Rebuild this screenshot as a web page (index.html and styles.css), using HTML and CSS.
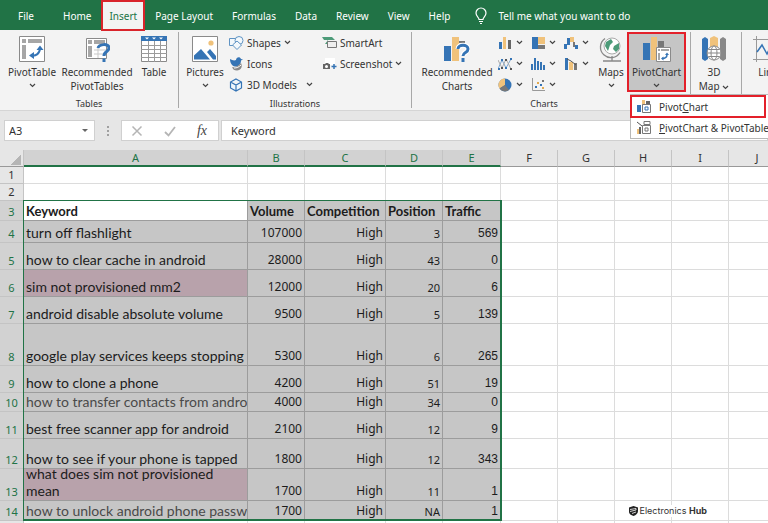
FILE: index.html
```
<!DOCTYPE html>
<html lang="en">
  <head>
    <meta charset="utf-8" />
    <title>Keywords</title>
    <link rel="stylesheet" href="styles.css">
  </head>

  <body>
    <svg class="defs" aria-hidden="true">
      <symbol id="chev" viewBox="0 0 7 5"><path d="M1 1l2.500 2.500L6 1" fill="none" stroke="#444" stroke-width="1.200"/></symbol>
    </svg>

    <nav class="tabs">
      <a class="file" href="#">File</a>
      <a href="#">Home</a>
      <a class="active" href="#">Insert</a>
      <a href="#">Page Layout</a>
      <a href="#">Formulas</a>
      <a href="#">Data</a>
      <a href="#">Review</a>
      <a href="#">View</a>
      <a href="#">Help</a>
      <button class="tell">
        <svg width="14" height="18" viewBox="0 0 14 18" fill="none" stroke="#fff" stroke-width="1.200"><path d="M5 12.500c0-2-3-3-3-6.500a5 5 0 0 1 10 0c0 3.500-3 4.500-3 6.500zM5 14.500h4M6 16.500h2"/></svg>
        Tell me what you want to do
      </button>
    </nav>

    <div class="ribbon">
      <section class="group tables">
        <div class="tools">
          <button class="big w56">
            <svg width="26" height="26" viewBox="0 0 26 26"><path d="M.5.500h25v25H.5z" fill="#fff" stroke="#8a8a8a"/><path d="M3 3h4v4H3zM9 3h14v4H9zM3 9h4v14H3z" fill="#a6a6a6"/><path d="M12 19.500c5 1 9-2 9-8" fill="none" stroke="#3574b5" stroke-width="2"/><path d="M17.500 14l3.500-4.500 3.500 4.500zM15 16l-5 3.500 5 3.500z" fill="#3574b5"/></svg>
            <span>PivotTable</span>
            <svg class="chev"><use href="#chev"/></svg>
          </button>
          <button class="big w74">
            <svg width="26" height="26" viewBox="0 0 26 26"><path d="M2.500 2.500h20v20h-20z" fill="#fff" stroke="#8a8a8a"/><path d="M4 4h4v4H4zM10 4h11v4H10zM4 10h4v11H4z" fill="#a6a6a6"/><path d="M10 14h12M10 18h12M14 10v12" stroke="#c9c9c9"/><path d="M14 12c1-4 11-5 11 0 0 4-5 3-5 8" fill="none" stroke="#3574b5" stroke-width="3"/><path d="M18.500 22.500h3v3.500h-3z" fill="#3574b5"/></svg>
            <span>Recommended<br>PivotTables</span>
          </button>
          <button class="big w40">
            <svg width="26" height="26" viewBox="0 0 26 26"><path d="M.5.500h25v25H.5z" fill="#fff" stroke="#8a8a8a"/><path d="M0 0h26v5H0z" fill="#3574b5"/><path d="M4 1.500h4l-2 2zM11 1.500h4l-2 2zM18 1.500h4l-2 2z" fill="#fff"/><path d="M0 9.500h26M0 13.500h26M0 17.500h26M0 21.500h26M7.500 5v21M13.500 5v21M19.500 5v21" stroke="#9b9b9b"/></svg>
            <span>Table</span>
          </button>
        </div>
        <h2>Tables</h2>
      </section>

      <section class="group illustrations">
        <div class="tools">
          <button class="big w44">
            <svg width="26" height="26" viewBox="0 0 26 26"><path d="M.5.500h25v25H.5z" fill="#fff" stroke="#8a8a8a"/><circle cx="19" cy="7" r="2.600" fill="#f0c27b"/><path d="M2 23.500v-4l7-6.500 9 10.500zM15 16l3-3 6 7v3.500h-3z" fill="#3574b5"/></svg>
            <span>Pictures</span>
            <svg class="chev"><use href="#chev"/></svg>
          </button>
          <div class="stack first">
            <button class="small">
              <svg width="15" height="14" viewBox="0 0 15 14" fill="#f3f8fc" stroke="#5f93c3"><path d="M.5 2.500h8v7h-8z"/><circle cx="10" cy="4.500" r="4"/><path d="M8 5l4.500 4L8 13.500 3.500 9z"/></svg>
              Shapes
              <svg class="chev"><use href="#chev"/></svg>
            </button>
            <button class="small">
              <svg width="15" height="14" viewBox="0 0 15 14"><path d="M1 2c2 1 4 2 6 1 0-3 4-4 5-1l2 .500-2 1c0 4-3 6-6 6C3 9 1 6 1 2z" fill="#3574b5"/><path d="M3 10c3 1 6-1 9-4 2 4 0 7-4 7.500-3 0-4-1-5-3.500z" fill="#888"/><path d="M5 11c3 0 5-1 7-3" stroke="#fff" fill="none"/></svg>
              Icons
            </button>
            <button class="small">
              <svg width="15" height="14" viewBox="0 0 15 14" fill="#eef6fc" stroke="#3574b5" stroke-width="1.200"><path d="M7 1l5.500 3v6L7 13l-5.500-3V4zM1.500 4L7 7l5.500-3M7 7v6"/></svg>
              3D Models
              <svg class="chev far"><use href="#chev"/></svg>
            </button>
          </div>
          <div class="stack">
            <button class="small">
              <svg width="15" height="14" viewBox="0 0 15 14"><path d="M0 1h10l3 3H5l3 4H3l3-4H2z" fill="#4d9b79"/><path d="M5.500 5.500h9v6h-9z" fill="#eee" stroke="#777"/></svg>
              SmartArt
            </button>
            <button class="small">
              <svg width="15" height="14" viewBox="0 0 15 14"><path d="M3 1h10v7H3z" fill="#fff"/><path d="M1 7h2l1-1h2l1 1h1v5H1z" fill="#666"/><circle cx="4.500" cy="9.500" r="1.500" fill="#fff"/><path d="M12 7v5M9.500 9.500h5" stroke="#3574b5" stroke-width="1.500"/></svg>
              Screenshot
              <svg class="chev"><use href="#chev"/></svg>
            </button>
          </div>
        </div>
        <h2>Illustrations</h2>
      </section>

      <section class="group charts">
        <div class="tools">
          <button class="big w74">
            <svg width="26" height="26" viewBox="0 0 26 26"><path d="M0 10h7v15H0z" fill="#3574b5"/><path d="M8 1h7v24H8z" fill="#f0c27b"/><path d="M15 5h6v2h-6z" fill="#777"/><path d="M14 13c0-5 10-5 10 0 0 4-5 3-5 7" fill="none" stroke="#fff" stroke-width="5"/><path d="M14 13c0-5 10-5 10 0 0 4-5 3-5 7" fill="none" stroke="#3574b5" stroke-width="3"/><path d="M17.500 22h3v4h-3z" fill="#3574b5"/></svg>
            <span>Recommended<br>Charts</span>
          </button>
          <div class="minis">
            <button class="mini" aria-label="Column chart">
              <svg width="14" height="14" viewBox="0 0 14 14"><path d="M1 6h3v7H1z" fill="#3574b5"/><path d="M5 1h3v12H5z" fill="#f0c27b"/><path d="M10 4h3v9h-3z" fill="#666"/></svg>
              <svg class="chev"><use href="#chev"/></svg>
            </button>
            <button class="mini" aria-label="Hierarchy chart">
              <svg width="14" height="14" viewBox="0 0 14 14"><path d="M1 1h6v12H1z" fill="#3574b5"/><path d="M7 1h7v7H7z" fill="#f0c27b"/><path d="M7 9h7v4H7z" fill="#777"/></svg>
              <svg class="chev"><use href="#chev"/></svg>
            </button>
            <button class="mini" aria-label="Waterfall chart">
              <svg width="14" height="14" viewBox="0 0 14 14"><path d="M0 8h3v5H0zM3 2h3v7H3z" fill="#3574b5"/><path d="M6 1h4v5H6z" fill="#f0c27b"/><path d="M9 6h2v5H9z" fill="#777"/><path d="M11 9h3v4h-3z" fill="#3574b5"/></svg>
              <svg class="chev"><use href="#chev"/></svg>
            </button>
            <button class="mini" aria-label="Line chart">
              <svg width="14" height="14" viewBox="0 0 14 14" fill="none"><path d="M0 12L4 3l4 8 5-9" stroke="#7ba5cf"/><path d="M0 3l4 8 4-9 5 10" stroke="#aaa"/><path d="M3 2h2v2H3zM7 10h2v2H7zM12 1h2v2h-2zM0 11h2v2H0z" fill="#3574b5"/><path d="M3 10h2v2H3zM7 2h2v2H7zM12 11h2v2h-2z" fill="#555"/></svg>
              <svg class="chev"><use href="#chev"/></svg>
            </button>
            <button class="mini" aria-label="Statistic chart">
              <svg width="14" height="14" viewBox="0 0 14 14"><path d="M0 7h2v6H0zM3 1h2v12H3zM6 4h2v9H6zM9 5h2v8H9zM12 8h2v5h-2z" fill="#3574b5"/></svg>
              <svg class="chev"><use href="#chev"/></svg>
            </button>
            <button class="mini" aria-label="Combo chart">
              <svg width="14" height="14" viewBox="0 0 14 14"><path d="M1 1h3v12H1z" fill="#3574b5"/><path d="M5 5h4v8H5z" fill="#f0c27b"/><path d="M10 6h3v7h-3z" fill="#777"/><path d="M3 2l4 2 5 4" stroke="#555" fill="none"/></svg>
              <svg class="chev"><use href="#chev"/></svg>
            </button>
            <button class="mini" aria-label="Pie chart">
              <svg width="14" height="14" viewBox="0 0 14 14"><circle cx="7" cy="7" r="6.500" fill="#3574b5"/><path d="M7 7V.500A6.500 6.500 0 0 0 1.500 10.500z" fill="#f0c27b"/><path d="M7 7l-5.500 3.500A6.500 6.500 0 0 0 11 12z" fill="#777"/></svg>
              <svg class="chev"><use href="#chev"/></svg>
            </button>
            <button class="mini" aria-label="Scatter chart">
              <svg width="14" height="14" viewBox="0 0 14 14"><path d="M1.500 0v12.500H14" stroke="#999" fill="none"/><path d="M4 8h2v2H4zM9 6h2v2H9z" fill="#3574b5"/><path d="M6 4h2v2H6zM11 9h2v2h-2z" fill="#e0a950"/><path d="M11 2h2v2h-2z" fill="#777"/></svg>
              <svg class="chev"><use href="#chev"/></svg>
            </button>
          </div>
          <button class="big w28">
            <svg width="26" height="26" viewBox="0 0 26 26" fill="none"><path d="M7 2.500a10.500 10.500 0 1 0 15 14M14 20v5M5 25h18" stroke="#888" stroke-width="1.300"/><circle cx="14" cy="10" r="8" fill="#fff" stroke="#aaa"/><path d="M8 6l5-3 2 3-3 3-2 6-3-5zM16 10l5-3v6l-3 3-3-3z" fill="#4d9b79"/></svg>
            <span>Maps</span>
            <svg class="chev"><use href="#chev"/></svg>
          </button>
          <div class="pivot">
            <button class="big pressed" aria-expanded="true">
              <svg width="28" height="26" viewBox="0 0 28 26"><path d="M0 7h7v17H0z" fill="#3574b5"/><path d="M8 1h6v23H8z" fill="#f0c27b"/><path d="M15 5h6v6h-6z" fill="#777"/><path d="M13.500 11.500h14v14h-14z" fill="#fff" stroke="#8a8a8a"/><path d="M15 13h2v2h-2zM18 13h8v2h-8zM15 17h2v7h-2z" fill="#a6a6a6"/><path d="M19 22.500c3 0 5-1 5-4" stroke="#3574b5" stroke-width="1.500" fill="none"/><path d="M22 19l2-2.500 2 2.500zM20.500 20.500l-2.500 2 2.500 2z" fill="#3574b5"/></svg>
              <span>PivotChart</span>
              <svg class="chev"><use href="#chev"/></svg>
            </button>
            <div class="menu" role="menu">
              <button class="item marked" role="menuitem">
                <svg width="14" height="14" viewBox="0 0 14 14"><path d="M0 5h4v7H0z" fill="#3574b5"/><path d="M5 0h3v5H5z" fill="#f0c27b"/><path d="M9 1h4v3H9z" fill="#666"/><path d="M5.500 4.500h8v8h-8z" fill="#fff" stroke="#777"/><path d="M8 7h3v3H8z" fill="none" stroke="#3574b5"/></svg>
                <span>Pivot<u>C</u>hart</span>
              </button>
              <button class="item" role="menuitem">
                <svg width="14" height="14" viewBox="0 0 14 14"><path d="M0 1l5 4" stroke="#555"/><path d="M0 8h2v5H0z" fill="#f0c27b"/><path d="M2 6h2v7H2z" fill="#666"/><path d="M7 .500h6v3H7z" fill="#fff" stroke="#777"/><path d="M5.500 4.500h8v8h-8z" fill="#fff" stroke="#777"/><path d="M8 7h3v3H8z" fill="none" stroke="#777"/></svg>
                <span><u>P</u>ivotChart &amp; PivotTable</span>
              </button>
            </div>
          </div>
        </div>
        <h2>Charts</h2>
      </section>

      <section class="group tours">
        <div class="tools">
          <button class="big w44">
            <svg width="26" height="26" viewBox="0 0 26 26"><path d="M1 3l3-2 3 2v20l-3 2-3-2z" fill="#3574b5"/><path d="M9 2l4-2 4 2v13H9z" fill="#f0c27b"/><path d="M19 3l3-2 3 2v20l-3 2-3-2z" fill="#888"/><g fill="#fff" stroke="#888"><circle cx="13" cy="17" r="7"/><ellipse cx="13" cy="17" rx="3" ry="7"/><path d="M6 17h14M7.500 13.500h11M7.500 20.500h11"/></g></svg>
            <span>3D<br>Map <svg class="chev"><use href="#chev"/></svg></span>
          </button>
        </div>
      </section>

      <section class="group sparklines">
        <div class="tools">
          <button class="big w44">
            <svg width="30" height="26" viewBox="0 0 30 26" fill="none"><path d="M3.500 0v26M0 3.500h30M0 23.500h30" stroke="#999"/><path d="M4 16l5-7 5 9 5-10 5 9 5-5" stroke="#3574b5" stroke-width="1.500"/></svg>
            <span>Line</span>
          </button>
        </div>
      </section>
    </div>

    <div class="formula-bar">
      <div class="name-box">
        <input aria-label="Name box" value="A3">
        <button aria-label="Open name list"><svg width="6" height="4" viewBox="0 0 6 4"><path d="M0 0h6L3 3z" fill="#666"/></svg></button>
      </div>
      <svg class="grip" width="2" height="12" viewBox="0 0 2 12"><path d="M0 1h2v2H0zM0 5h2v2H0zM0 9h2v2H0z" fill="#a0a0a0"/></svg>
      <div class="actions">
        <button aria-label="Cancel"><svg width="12" height="12" viewBox="0 0 12 12" stroke="#b5b5b5" stroke-width="1.500"><path d="M1.500 1.500l9 9M10.500 1.500l-9 9"/></svg></button>
        <button aria-label="Enter"><svg width="12" height="12" viewBox="0 0 12 12" fill="none" stroke="#b5b5b5" stroke-width="1.800"><path d="M1 7l3.500 3.500L11 2"/></svg></button>
        <button class="fx" aria-label="Insert function">fx</button>
      </div>
      <input class="formula" aria-label="Formula" value="Keyword">
    </div>

    <main class="sheet">
      <table>
        <colgroup>
          <col class="c-num"><col class="c-a"><col class="c-n"><col class="c-c"><col class="c-n"><col class="c-e">
          <col class="c-n"><col class="c-n"><col class="c-n"><col class="c-n"><col class="c-n">
        </colgroup>
        <thead>
          <tr>
            <th><div class="corner"></div></th>
            <th class="sel">A</th><th class="sel">B</th><th class="sel">C</th><th class="sel">D</th><th class="sel">E</th>
            <th>F</th><th>G</th><th>H</th><th>I</th><th>J</th>
          </tr>
        </thead>
        <tbody>
          <tr class="h17"><th>1</th><td></td><td></td><td></td><td></td><td></td><td></td><td></td><td></td><td></td><td></td></tr>
          <tr class="h17"><th>2</th><td></td><td></td><td></td><td></td><td></td><td></td><td></td><td></td><td></td><td></td></tr>
        </tbody>
        <tbody class="range">
          <tr class="head h20"><th>3</th><td class="current">Keyword</td><td>Volume</td><td>Competition</td><td>Position</td><td>Traffic</td><td></td><td></td><td></td><td></td><td></td></tr>
          <tr class="h22"><th>4</th><td>turn off flashlight</td><td>107000</td><td>High</td><td>3</td><td>569</td><td></td><td></td><td></td><td></td><td></td></tr>
          <tr class="h27"><th>5</th><td>how to clear cache in android</td><td>28000</td><td>High</td><td>43</td><td>0</td><td></td><td></td><td></td><td></td><td></td></tr>
          <tr class="h27"><th>6</th><td class="pink">sim not provisioned mm2</td><td>12000</td><td>High</td><td>20</td><td>6</td><td></td><td></td><td></td><td></td><td></td></tr>
          <tr class="h27"><th>7</th><td>android disable absolute volume</td><td>9500</td><td>High</td><td>5</td><td>139</td><td></td><td></td><td></td><td></td><td></td></tr>
          <tr class="h42"><th>8</th><td>google play services keeps stopping</td><td>5300</td><td>High</td><td>6</td><td>265</td><td></td><td></td><td></td><td></td><td></td></tr>
          <tr class="h27"><th>9</th><td>how to clone a phone</td><td>4200</td><td>High</td><td>51</td><td>19</td><td></td><td></td><td></td><td></td><td></td></tr>
          <tr class="h19"><th>10</th><td class="soft">how to transfer contacts from android</td><td>4000</td><td>High</td><td>34</td><td>0</td><td></td><td></td><td></td><td></td><td></td></tr>
          <tr class="h27"><th>11</th><td>best free scanner app for android</td><td>2100</td><td>High</td><td>12</td><td>9</td><td></td><td></td><td></td><td></td><td></td></tr>
          <tr class="h30"><th>12</th><td>how to see if your phone is tapped</td><td>1800</td><td>High</td><td>12</td><td>343</td><td></td><td></td><td></td><td></td><td></td></tr>
          <tr class="h32"><th>13</th><td class="pink"><div class="wrap">what does sim not provisioned mean</div></td><td>1700</td><td>High</td><td>11</td><td>1</td><td></td><td></td><td></td><td></td><td></td></tr>
          <tr class="h20"><th>14</th><td class="soft">how to unlock android phone password</td><td>1700</td><td>High</td><td>NA</td><td>1</td><td></td><td></td><td></td><td></td><td></td></tr>
        </tbody>
        <tbody>
          <tr class="h20"><th></th><td></td><td></td><td></td><td></td><td></td><td></td><td></td><td></td><td></td><td></td></tr>
        </tbody>
      </table>
      <div class="selection"></div>
      <div class="brand">
        <svg width="9" height="10" viewBox="0 0 9 10"><path d="M0 1.500L4.500 0 9 1.500V5c0 2.500-2 4-4.500 5C2 9 0 8 0 6z" fill="#222"/><path d="M1 3.500l6-1v1.500L1 5.500M3 7.500l4-1.500" fill="none" stroke="#fff" stroke-width=".8"/></svg>
        <span>Electronics <b>Hub</b></span>
      </div>
    </main>
  </body>
</html>
```
FILE: styles.css
```
* {
  box-sizing: border-box;
}
body {
  margin: 0;
  height: 100vh;
  overflow: hidden;
  display: flex;
  flex-direction: column;
  background-color: #e6e6e6;
  color: #333;
  font: 10px/14px "Noto Sans", "Open Sans", sans-serif;
}
button,
input {
  font: inherit;
  color: inherit;
  border: 0;
  margin: 0;
  padding: 0;
  background: none;
}
svg {
  flex: none;
}
.defs {
  position: absolute;
  width: 0;
  height: 0;
}
.chev {
  width: 7px;
  height: 5px;
}

/* tabs */
.tabs {
  display: flex;
  flex: none;
  gap: 1px;
  height: 30px;
  background-color: #217346;
  color: #fff;
  white-space: nowrap;
}
.tabs a {
  color: inherit;
  text-decoration: none;
  padding: 9px 9px 0;
}
.tabs a.file {
  padding: 9px 19px 0 18px;
}
.tabs a.active {
  height: 31px;
  padding: 7px 6px 0;
  border: 2px solid #d9242b;
  background-color: #f3f3f3;
  color: #217346;
  z-index: 1;
}
.tell {
  display: flex;
  align-items: center;
  gap: 10px;
  padding: 2px 0 0 14px;
}

/* ribbon */
.ribbon {
  display: flex;
  flex: none;
  height: 81px;
  background-color: #f3f3f3;
  border-bottom: 1px solid #d5d5d5;
}
.group {
  flex: none;
  padding: 6px 4px 0;
  border-right: 1px solid #b5b5b5;
  border-image: linear-gradient(transparent 4%, #a8a8a8 4%, #a8a8a8 96%, transparent 96%) 1;
  border-width: 0 1px 0 0;
}
.tables {
  width: 179px;
}
.illustrations {
  width: 233px;
}
.charts {
  width: 279px;
  padding-left: 8px;
}
.tours {
  width: 51px;
  padding-left: 1px;
}
.sparklines {
  padding-left: 4px;
}
.tools {
  display: flex;
  height: 61px;
}
.group h2 {
  margin: 0;
  font-size: 9px;
  font-weight: normal;
  line-height: 14px;
  text-align: center;
}
.charts h2 {
  padding-right: 18px;
}
.big {
  display: flex;
  flex-direction: column;
  align-items: center;
  flex: none;
  white-space: nowrap;
}
.big > span {
  margin-top: 3px;
}
.big > .chev {
  margin-top: 4px;
}
.w28 { width: 28px; }
.w40 { width: 40px; }
.w44 { width: 44px; }
.w56 { width: 56px; }
.w74 { width: 74px; }
.stack {
  display: flex;
  flex-direction: column;
  gap: 8px;
  padding-left: 2px;
}
.stack.first {
  width: 93px;
}
.small {
  display: flex;
  align-items: center;
  gap: 3px;
  height: 13px;
  white-space: nowrap;
}
.small .far {
  margin-left: 6px;
}
.minis {
  display: grid;
  grid-template-columns: repeat(3, 33px);
  grid-auto-rows: 21px;
  padding-left: 4px;
  width: 104px;
}
.mini {
  display: flex;
  align-items: center;
  gap: 4px;
  height: 13px;
}
.pivot {
  position: relative;
  margin-left: 2px;
}
.pressed {
  width: 59px;
  height: 60px;
  margin-top: -4px;
  padding-top: 2px;
  border: 2px solid #e3202a;
  background-color: #c5c5c5;
}
.menu {
  position: absolute;
  top: 58px;
  left: 3px;
  width: 180px;
  border: 1px solid #b8b8b8;
  background-color: #fff;
  z-index: 2;
}
.item {
  display: flex;
  align-items: center;
  gap: 8px;
  width: 136px;
  height: 20px;
  padding-left: 6px;
  white-space: nowrap;
}
.item.marked {
  height: 23px;
  margin-left: -1px;
  padding-left: 5px;
  border: 2px solid #e3202a;
}

/* formula bar */
.formula-bar {
  display: flex;
  flex: none;
  align-items: center;
  height: 39px;
  padding-left: 4px;
  font-size: 11px;
}
.name-box,
.actions,
.formula {
  height: 21px;
  border: 1px solid #d0d0d0;
  background-color: #fff;
}
.name-box {
  display: flex;
  width: 91px;
  padding: 0 6px 0 4px;
}
.name-box button {
  display: flex;
  align-items: center;
}
.name-box input {
  flex: 1;
  min-width: 0;
}
.grip {
  margin: 0 12px;
}
.actions {
  display: flex;
  align-items: center;
  justify-content: space-between;
  width: 98px;
  padding: 0 11px 0 9px;
}
.actions button {
  display: flex;
}
.actions .fx {
  font: italic 14px/16px "Liberation Serif", serif;
  color: #444;
}
.formula {
  flex: 1;
  min-width: 0;
  margin-left: 2px;
  padding-left: 9px;
}

/* sheet */
.sheet {
  position: relative;
  flex: 1;
  overflow: hidden;
  background-color: #fff;
}
table {
  table-layout: fixed;
  width: 786px;
  border-collapse: separate;
  border-spacing: 0;
}
.c-num { width: 24px; }
.c-a { width: 224px; }
.c-n { width: 57px; }
.c-c { width: 81px; }
.c-e { width: 58px; }
.h17 { height: 17px; }
.h19 { height: 19px; }
.h20 { height: 20px; }
.h22 { height: 22px; }
.h27 { height: 27px; }
.h30 { height: 30px; }
.h32 { height: 32px; }
.h42 { height: 42px; }
th {
  padding: 0;
  border-right: 1px solid #c4c4c4;
  border-bottom: 1px solid #c4c4c4;
  background-color: #e6e6e6;
  font-size: 11px;
  font-weight: normal;
  line-height: 16px;
  vertical-align: bottom;
}
thead th {
  height: 17px;
  border-bottom-color: #999;
}
thead th.sel {
  background-color: #d2d2d2;
  border-bottom: 2px solid #217346;
  color: #217346;
  line-height: 15px;
}
.corner {
  width: 11px;
  height: 11px;
  margin: 0 2px 1px auto;
  background: linear-gradient(135deg, transparent 50%, #b5b5b5 50%);
}
td {
  padding: 0 2px;
  border-right: 1px solid #dcdcdc;
  border-bottom: 1px solid #dcdcdc;
  font-family: Lato, sans-serif;
  font-size: 14px;
  line-height: 16px;
  white-space: nowrap;
  overflow: hidden;
  vertical-align: bottom;
  color: #1c1c1c;
}
.range th {
  background-color: #d2d2d2;
  color: #217346;
}
.range td:nth-child(-n+6) {
  background-color: #c6c6c6;
  border-color: #9c9c9c;
}
.range td:nth-child(n+3) {
  text-align: right;
}
.range td:nth-child(2) {
  padding-bottom: 1px;
}
.range td:nth-child(3),
.range td:nth-child(4) {
  font: 12px/18px "Noto Sans", sans-serif;
}
.range td:nth-child(5) {
  font: 11px/16px "Noto Sans", sans-serif;
}
.range td:nth-child(6) {
  font: 12px/18px "Liberation Sans", sans-serif;
}
.range .head td:nth-child(n+2) {
  font: bold 13px/18px Lato, sans-serif;
  text-align: left;
  padding-bottom: 0;
}
.range td.current:nth-child(2) {
  background-color: #fff;
}
.range td.pink:nth-child(2) {
  background-color: #b8a2ab;
}
.range td.soft {
  color: #4a4a4a;
}
.wrap {
  display: flex;
  align-items: flex-end;
  height: 30px;
  line-height: 17px;
  white-space: normal;
  overflow: hidden;
}
.selection {
  position: absolute;
  top: 50px;
  left: 23px;
  width: 479px;
  height: 321px;
  border: 2px solid #217346;
  border-width: 1px 2px 2px 1px;
}
.brand {
  position: absolute;
  right: 61px;
  bottom: 6px;
  display: flex;
  align-items: center;
  gap: 2px;
  background-color: #fff;
  font: 9px/12px Inter, sans-serif;
}
```
